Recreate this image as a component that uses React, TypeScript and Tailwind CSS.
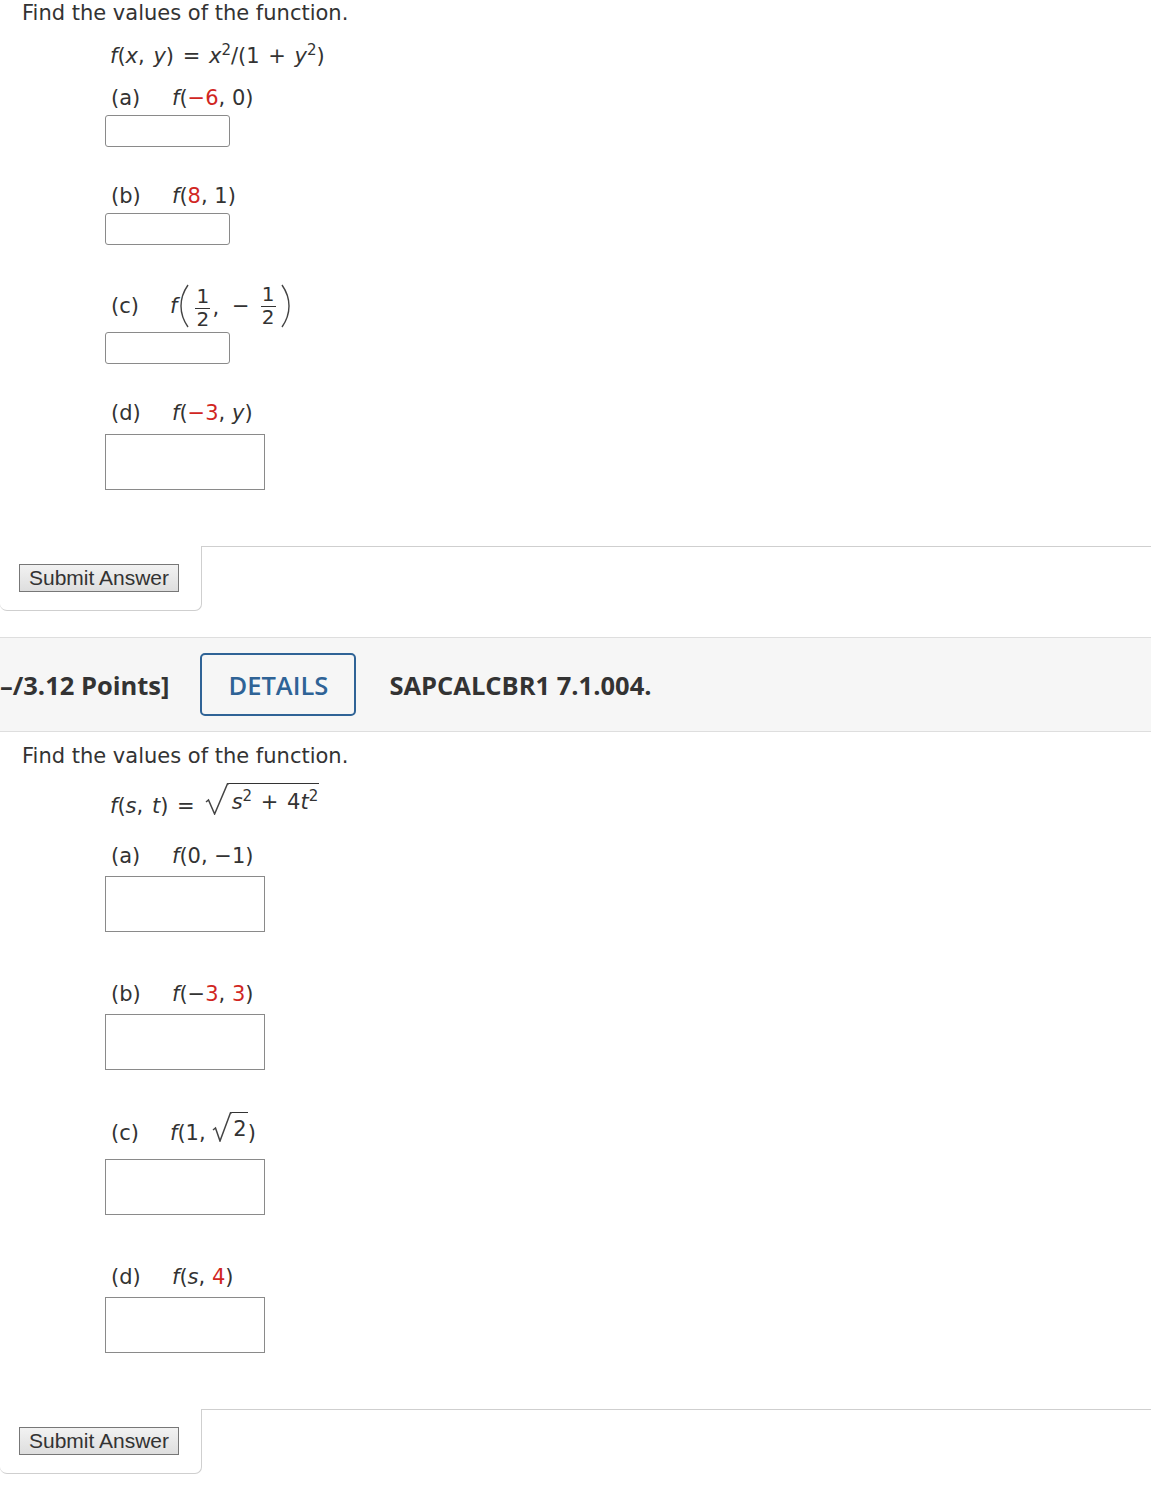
import type { ReactNode } from "react";

const body = "font-['DejaVu_Sans',Verdana,sans-serif] text-[21px] leading-[26px] text-[#333]";
const red = "text-[#d1261f]";

function F() {
  return <i className="italic">f</i>;
}

function Sup({ children }: { children: ReactNode }) {
  return <sup className="text-[15px] top-[-0.55em]">{children}</sup>;
}

function Label({ tag, children }: { tag: string; children: ReactNode }) {
  return (
    <div className="flex items-center pl-[6px]">
      <span className="w-[61px]">({tag})</span>
      <span>{children}</span>
    </div>
  );
}

function SmallBox() {
  return <div className="w-[125px] h-[32px] border border-[#8a8a8a] rounded-[3px] bg-white" />;
}

function BigBox() {
  return <div className="w-[160px] h-[56px] border border-[#8a8a8a] bg-white" />;
}

function Paren({ right }: { right?: boolean }) {
  return (
    <svg width="10" height="46" viewBox="0 0 10 46" className="shrink-0">
      <path
        d={right ? "M2 2 Q9 12 9 23 Q9 34 2 44" : "M8 2 Q1 12 1 23 Q1 34 8 44"}
        fill="none"
        stroke="#444"
        strokeWidth="1.4"
      />
    </svg>
  );
}

function Half() {
  return (
    <span className="inline-flex flex-col items-center text-[20px] leading-[19px]">
      <span className="pb-[2px]">1</span>
      <span className="border-t border-[#333] w-[15px] text-center pt-[1px]">2</span>
    </span>
  );
}

function SubmitPanel() {
  return (
    <div className="flex">
      <div className="w-[202px] h-[65px] border-r border-b border-[#cfcfcf] rounded-br-[7px] rounded-bl-[7px] pl-[19px] pt-[18px] shrink-0">
        <button className="w-[160px] h-[28px] border border-[#777] bg-gradient-to-b from-[#f2f2f2] to-[#dedede] font-['Liberation_Sans',Arial,sans-serif] text-[21px] leading-[26px] text-[#333]">
          Submit Answer
        </button>
      </div>
      <div className="flex-1 border-t border-[#cfcfcf]" />
    </div>
  );
}

function Sqrt({ h, w, children }: { h: number; w: number; children: ReactNode }) {
  const mid = Math.round(h * 0.55);
  return (
    <span className="inline-flex items-start">
      <svg width={w} height={h} viewBox={`0 0 ${w} ${h}`} className="shrink-0">
        <path
          d={`M1 ${mid + 1} L3.5 ${mid - 1} L${w * 0.4} ${h - 1} L${w - 1.5} 0.8 L${w} 0.8`}
          fill="none"
          stroke="#444"
          strokeWidth="1.5"
        />
      </svg>
      <span
        className="border-t-[1.5px] border-[#333] leading-[26px] pr-[1px]"
        style={{ paddingTop: h - 27 }}
      >
        {children}
      </span>
    </span>
  );
}

export default function App() {
  return (
    <div className={`${body} bg-white w-[1151px] min-h-[1493px] overflow-hidden`}>
      {/* question one */}
      <div className="pl-[22px]">Find the values of the function.</div>
      <div className="pl-[110px] mt-[17px] [word-spacing:2px]">
        <F />(<i>x</i>, <i>y</i>) = <i>x</i><Sup>2</Sup>/(1 + <i>y</i><Sup>2</Sup>)
      </div>
      <div className="pl-[105px]">
        <div className="mt-[16px]">
          <Label tag="a">
            <F />(<span className={red}>−6</span>, 0)
          </Label>
        </div>
        <div className="mt-[4px]"><SmallBox /></div>

        <div className="mt-[36px]">
          <Label tag="b">
            <F />(<span className={red}>8</span>, 1)
          </Label>
        </div>
        <div className="mt-[4px]"><SmallBox /></div>

        <div className="mt-[38px] flex items-center pl-[6px] h-[46px]">
          <span className="w-[59px]">(c)</span>
          <span className="flex items-center">
            <span className="mr-[3px]"><F /></span>
            <Paren />
            <span className="ml-[5px]"><Half /></span>
            <span className="self-end mb-[8px] ml-[2px] mr-[13px]">,</span>
            <span className="mr-[11px]">−</span>
            <Half />
            <span className="ml-[4px]"><Paren right /></span>
          </span>
        </div>
        <div className="mt-[3px]"><SmallBox /></div>

        <div className="mt-[36px]">
          <Label tag="d">
            <F />(<span className={red}>−3</span>, <i>y</i>)
          </Label>
        </div>
        <div className="mt-[8px]"><BigBox /></div>
      </div>

      <div className="mt-[56px]">
        <SubmitPanel />
      </div>

      {/* question header */}
      <div className="mt-[26px] h-[95px] bg-[#f6f6f6] border-t border-b border-[#dedede] flex items-center font-['Open_Sans',sans-serif] font-bold text-[25.5px] text-[#333]">
        <span>–/3.12 Points]</span>
        <div className="ml-[31px] w-[156px] h-[63px] border-2 border-[#2f6396] rounded-[5px] flex items-center justify-center text-[#2f6396] font-semibold text-[25.5px]">
          DETAILS
        </div>
        <span className="ml-[33px]">SAPCALCBR1 7.1.004.</span>
      </div>

      {/* question two */}
      <div className="pl-[22px] mt-[11px]">Find the values of the function.</div>
      <div className="pl-[110px] mt-[18px] flex items-end h-[34px] [word-spacing:2px]">
        <span className="mb-[2px]">
          <F />(<i>s</i>, <i>t</i>) =
        </span>
        <span className="ml-[10px]">
          <Sqrt h={32} w={24}>
            <span className="ml-[3px]"><i>s</i><Sup>2</Sup> + 4<i>t</i><Sup>2</Sup></span>
          </Sqrt>
        </span>
      </div>
      <div className="pl-[105px]">
        <div className="mt-[22px]">
          <Label tag="a">
            <F />(0, −1)
          </Label>
        </div>
        <div className="mt-[7px]"><BigBox /></div>

        <div className="mt-[49px]">
          <Label tag="b">
            <F />(−<span className={red}>3</span>, <span className={red}>3</span>)
          </Label>
        </div>
        <div className="mt-[7px]"><BigBox /></div>

        <div className="mt-[48px] flex items-end pl-[6px] h-[30px]">
          <span className="w-[59px] mb-[2px]">(c)</span>
          <span className="flex items-end mb-[2px]">
            <F />(1,&nbsp;
            <span className="mb-[-2px]">
              <Sqrt h={30} w={20}>
                <span className="ml-[1px]">2</span>
              </Sqrt>
            </span>
            )
          </span>
        </div>
        <div className="mt-[11px]"><BigBox /></div>

        <div className="mt-[49px]">
          <Label tag="d">
            <F />(<i>s</i>, <span className={red}>4</span>)
          </Label>
        </div>
        <div className="mt-[7px]"><BigBox /></div>
      </div>

      <div className="mt-[56px]">
        <SubmitPanel />
      </div>
    </div>
  );
}
